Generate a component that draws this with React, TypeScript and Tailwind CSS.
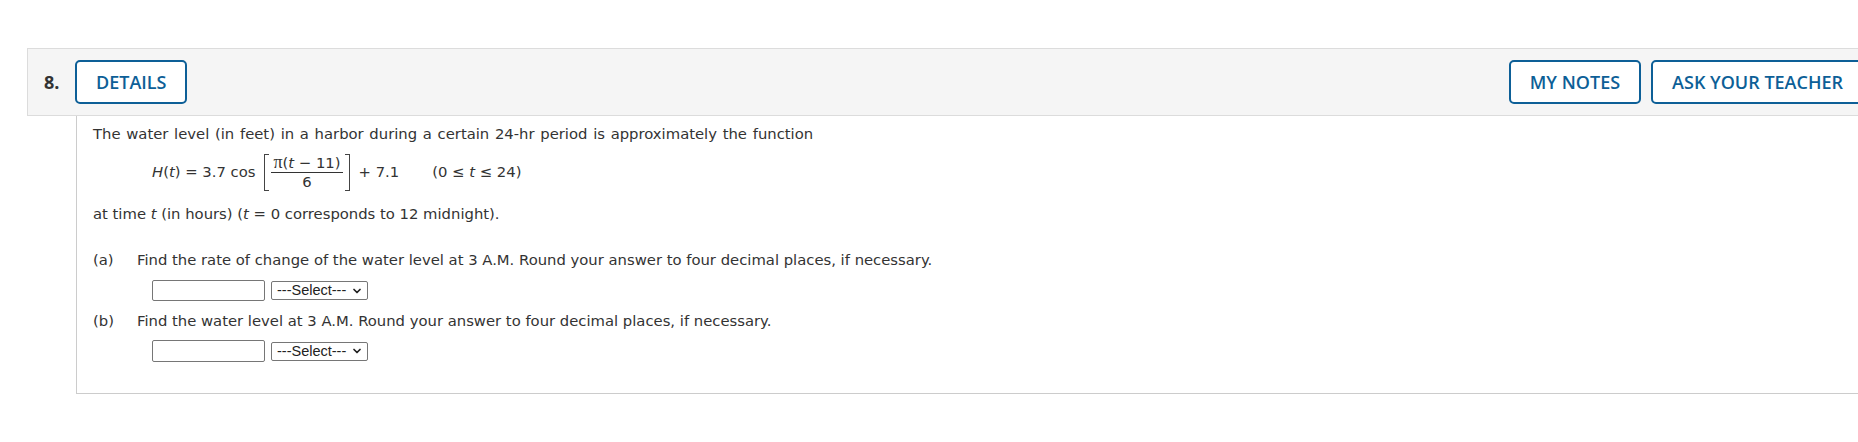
import { ChevronDown } from "lucide-react";

const blue = "border-[#0d5f97] text-[#0d5f97]";

function HeaderButton({ label }: { label: string }) {
  return (
    <button
      type="button"
      className={`h-[44px] shrink-0 rounded-[5px] border-2 bg-white px-[19px] text-[18px] font-semibold leading-none ${blue}`}
    >
      {label}
    </button>
  );
}

function AnswerRow({ tall }: { tall?: boolean }) {
  return (
    <div className="flex items-center gap-[6px] pl-[59px]">
      <input
        type="text"
        className={`${tall ? "h-[22px]" : "h-[21px]"} w-[113px] rounded-[2px] border border-[#767676] bg-white`}
      />
      <div className="flex h-[19px] w-[97px] items-center gap-[5px] rounded-[2px] border border-[#767676] bg-white pl-[5px] font-['Liberation_Sans',Arial,sans-serif] text-[14.5px] leading-none text-[#222]">
        <span>---Select---</span>
        <ChevronDown className="h-[12px] w-[12px] text-[#222]" strokeWidth={3.5} />
      </div>
    </div>
  );
}

function Bracket({ side }: { side: "left" | "right" }) {
  return (
    <span
      className={`inline-block h-[37px] w-[5px] border-y border-[#444] ${
        side === "left" ? "border-l" : "border-r"
      }`}
    />
  );
}

export default function App() {
  return (
    <div className="h-[442px] w-[1858px] overflow-hidden bg-white pl-[27px] pt-[48px] font-['DejaVu_Sans',Verdana,sans-serif] text-[#333]">
      <div className="flex h-[68px] w-[1870px] items-center border border-[#dcdcdc] bg-[#f5f5f5] pl-[16px] pr-[32px] font-['Open_Sans',sans-serif]">
        <span className="w-[14px] text-[18px] font-bold text-[#333]">8.</span>
        <div className="ml-[17px]">
          <HeaderButton label="DETAILS" />
        </div>
        <div className="ml-auto flex gap-[10px]">
          <HeaderButton label="MY NOTES" />
          <HeaderButton label="ASK YOUR TEACHER" />
        </div>
      </div>

      <div className="ml-[49px] w-[1900px] border-b border-l border-[#cccccc] pb-[31px] pl-[16px] pt-[8px] text-[14.8px] leading-[20px]">
        <p className="[word-spacing:1px]">
          The water level (in feet) in a harbor during a certain 24-hr period is approximately the
          function
        </p>

        <div className="ml-[59px] mt-[8px] flex h-[40px] items-center">
          <span>
            <i>H</i>(<i>t</i>) = 3.7 cos
          </span>
          <span className="ml-[9px] flex items-center">
            <Bracket side="left" />
            <span className="mx-[2px] inline-flex flex-col items-center">
              <span className="px-[2px] leading-[18px]">
                <span className="font-['Liberation_Serif',serif] text-[18px]">π</span>(<i>t</i> − 11)
              </span>
              <span className="h-px w-full bg-[#333]" />
              <span className="leading-[18px]">6</span>
            </span>
            <Bracket side="right" />
          </span>
          <span className="ml-[9px]">+ 7.1</span>
          <span className="ml-[33px]">
            (0 ≤ <i>t</i> ≤ 24)
          </span>
        </div>

        <p className="mt-[12px]">
          at time <i>t</i> (in hours) (<i>t</i> = 0 corresponds to 12 midnight).
        </p>

        <div className="mt-[26px] flex">
          <span className="w-[44px]">(a)</span>
          <span>
            Find the rate of change of the water level at 3 A.M. Round your answer to four decimal
            places, if necessary.
          </span>
        </div>
        <div className="mt-[10px]">
          <AnswerRow />
        </div>

        <div className="mt-[10px] flex">
          <span className="w-[44px]">(b)</span>
          <span>
            Find the water level at 3 A.M. Round your answer to four decimal places, if necessary.
          </span>
        </div>
        <div className="mt-[9px]">
          <AnswerRow tall />
        </div>
      </div>
    </div>
  );
}
